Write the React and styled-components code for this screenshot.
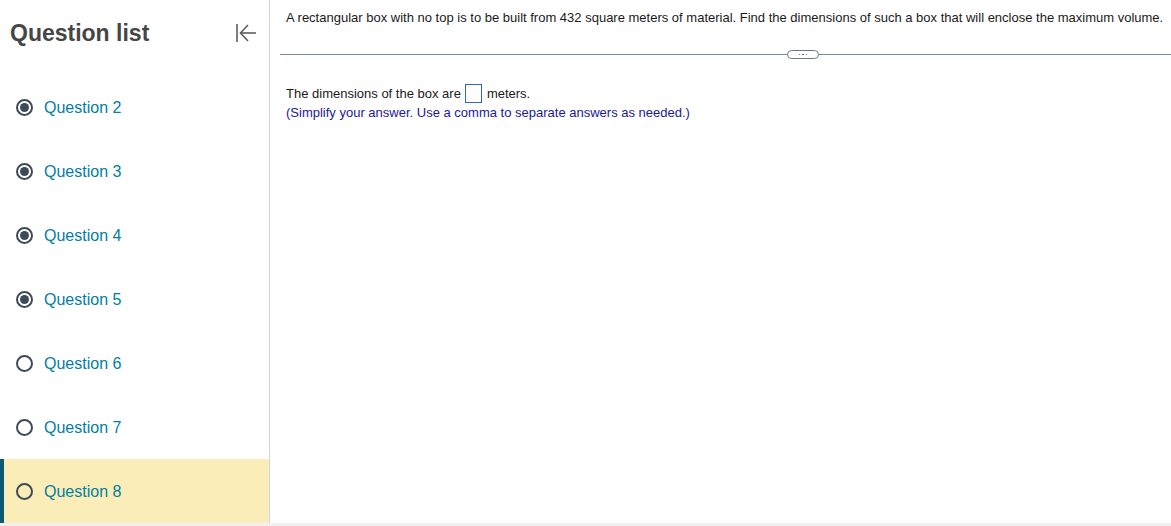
import React from 'react';
import styled, { createGlobalStyle } from 'styled-components';

const GlobalStyle = createGlobalStyle`
	html, body {
		margin: 0;
		padding: 0;
		background: #f0f0f0;
		font-family: Arial, "Liberation Sans", Helvetica, sans-serif;
	}
`;

const Page = styled.div`
	display: flex;
	height: 523px;
	background: #ffffff;
`;

const Sidebar = styled.aside`
	width: 269px;
	flex-shrink: 0;
	border-right: 1px solid #d3d3dd;
	display: flex;
	flex-direction: column;
`;

const SidebarHeader = styled.div`
	height: 75px;
	display: flex;
	align-items: center;
	justify-content: space-between;
	padding: 0 10px 9px 10px;
	box-sizing: border-box;
`;

const Title = styled.h2`
	margin: 0;
	font-size: 23px;
	font-weight: bold;
	color: #464646;
`;

const CollapseButton = styled.button`
	border: none;
	background: none;
	padding: 0;
	margin-right: 1px;
	width: 24px;
	height: 24px;
	display: flex;
	align-items: center;
	justify-content: center;
	cursor: pointer;
`;

const List = styled.ul`
	list-style: none;
	margin: 0;
	padding: 0;
`;

const Item = styled.li`
	height: 64px;
	display: flex;
	align-items: center;
	gap: 11px;
	padding-left: ${(p) => (p.$current ? '12px' : '16px')};
	padding-top: 1px;
	box-sizing: border-box;
	background: ${(p) => (p.$current ? '#fbedb7' : 'transparent')};
	border-left: ${(p) => (p.$current ? '4px solid #0b5a73' : 'none')};
	font-size: 16px;
	color: #007fa3;
`;

const Radio = styled.span`
	width: 17px;
	height: 17px;
	box-sizing: border-box;
	border-radius: 50%;
	border: 2px solid #3f4a59;
	display: flex;
	align-items: center;
	justify-content: center;

	&::after {
		content: '';
		display: ${(p) => (p.$done ? 'block' : 'none')};
		width: 9px;
		height: 9px;
		border-radius: 50%;
		background: #3f4a59;
	}
`;

const Main = styled.main`
	flex: 1;
	padding-top: 10px;
	font-size: 13px;
	color: #1a1a1a;
`;

const Prompt = styled.p`
	margin: 0 0 0 16px;
	line-height: 15px;
	white-space: nowrap;
`;

const Divider = styled.div`
	position: relative;
	margin: 29px 0 0 10px;
	height: 1px;
	background: #7d8aa0;
`;

const MoreButton = styled.span`
	position: absolute;
	left: 507px;
	top: -4px;
	width: 30px;
	height: 7px;
	border: 1px solid #6c7a90;
	border-radius: 5px;
	background: #ffffff;
	display: flex;
	align-items: center;
	justify-content: center;
	gap: 2px;

	i {
		width: 1.5px;
		height: 1.5px;
		background: #4a5870;
		border-radius: 50%;
	}
`;

const Answer = styled.div`
	margin: 29px 0 0 16px;
	line-height: 19px;
`;

const AnswerLine = styled.div`
	display: flex;
	align-items: center;
	gap: 4px;
`;

const AnswerBox = styled.span`
	width: 17px;
	height: 19px;
	box-sizing: border-box;
	border: 1px solid #2f63d8;
	margin: 0 1px 0 0;
`;

const Hint = styled.div`
	color: #1a1a9a;
	margin-top: 0;
`;

const questions = [
	{ n: 2, done: true },
	{ n: 3, done: true },
	{ n: 4, done: true },
	{ n: 5, done: true },
	{ n: 6, done: false },
	{ n: 7, done: false },
	{ n: 8, done: false, current: true },
];

const App = () => {
	return (
		<>
			<GlobalStyle />
			<Page>
				<Sidebar>
					<SidebarHeader>
						<Title>Question list</Title>
						<CollapseButton aria-label="Collapse">
							<svg width="22" height="22" viewBox="0 0 22 22" fill="none" stroke="#5b5f5e" strokeWidth="1.6">
								<line x1="2" y1="2" x2="2" y2="20" />
								<line x1="6" y1="11" x2="21" y2="11" />
								<polyline points="13,3 5.5,11 13,19" />
							</svg>
						</CollapseButton>
					</SidebarHeader>
					<List>
						{questions.map((q) => (
							<Item key={q.n} $current={q.current}>
								<Radio $done={q.done} />
								Question {q.n}
							</Item>
						))}
					</List>
				</Sidebar>
				<Main>
					<Prompt>
						A rectangular box with no top is to be built from 432 square meters of material. Find the dimensions of such a box that will enclose the maximum volume.
					</Prompt>
					<Divider>
						<MoreButton>
							<i />
							<i />
							<i />
						</MoreButton>
					</Divider>
					<Answer>
						<AnswerLine>
							The dimensions of the box are <AnswerBox /> meters.
						</AnswerLine>
						<Hint>(Simplify your answer. Use a comma to separate answers as needed.)</Hint>
					</Answer>
				</Main>
			</Page>
		</>
	);
};

export default App;
